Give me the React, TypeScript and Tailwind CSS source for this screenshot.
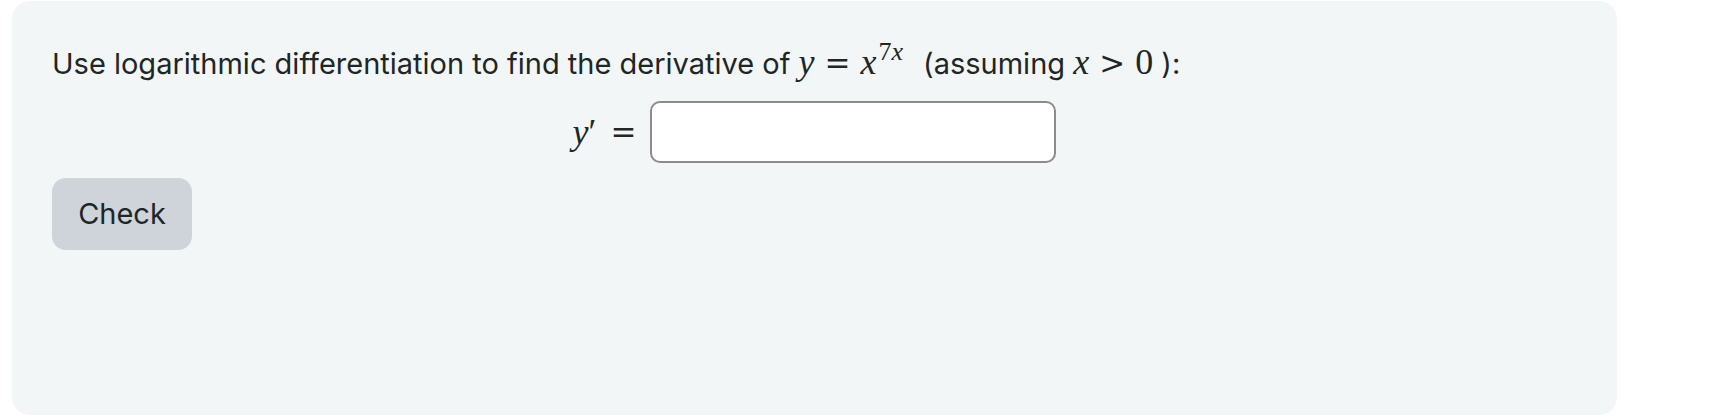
export default function App() {
  const serif = "font-['Liberation_Serif',serif]"
  const op = "font-['DejaVu_Serif',serif] text-[31px] font-light"
  return (
    <div className="w-[1721px] h-[417px] bg-white pt-px font-['Inter',sans-serif] text-[#1e2626]">
      <div className="ml-[12px] w-[1605px] h-[414px] rounded-[18px] bg-[#f2f6f7] pl-[40px] pt-[39px]">
        <p className="h-[44px] text-[29px] leading-[44px] whitespace-nowrap">
          Use logarithmic differentiation to find the derivative of{' '}
          <span className={`${serif} text-[36px] italic`}>y</span>
          <span className={`${op} mx-[10px]`}>=</span>
          <span className={`${serif} text-[36px] italic`}>x</span>
          <span className={`${serif} text-[26px] leading-none align-baseline relative -top-[14px] ml-[2px]`}>
            7<span className="italic">x</span>
          </span>
          <span className="ml-[20px]">(assuming </span>
          <span className={`${serif} text-[36px] italic`}>x</span>
          <span className={`${op} mx-[10px]`}>&gt;</span>
          <span className={`${serif} text-[36px]`}>0</span> ):
        </p>
        <div className="mt-[17px] h-[62px] flex items-center justify-center pr-[40px]">
          <span className={`${serif} text-[36px] italic leading-none`}>
            y<span className="not-italic">′</span>
          </span>
          <span className={`${op} leading-none ml-[14px] mr-[14px]`}>=</span>
          <input
            type="text"
            className="w-[406px] h-[62px] rounded-[10px] border-2 border-[#8a8a90] bg-white outline-none"
          />
        </div>
        <button className="mt-[15px] w-[140px] h-[72px] rounded-[14px] bg-[#cfd3da] text-[29px] text-[#1e2626]">
          Check
        </button>
      </div>
    </div>
  )
}
